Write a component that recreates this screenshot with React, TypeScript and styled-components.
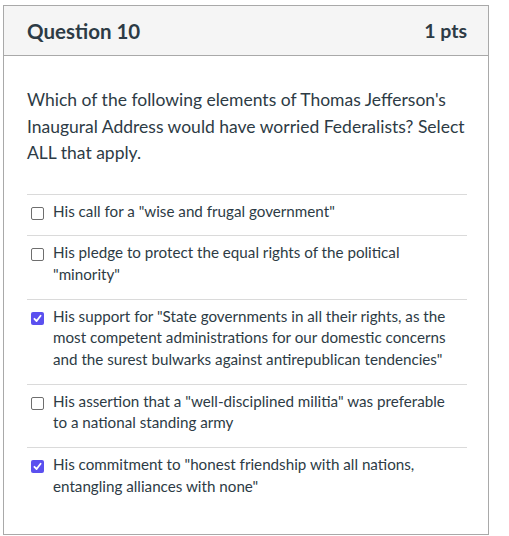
import React from 'react'
import styled, { createGlobalStyle } from 'styled-components'

interface IAnswer {
  text: string
  checked: boolean
}

const answers: IAnswer[] = [
  { text: 'His call for a "wise and frugal government"', checked: false },
  { text: 'His pledge to protect the equal rights of the political "minority"', checked: false },
  {
    text: 'His support for "State governments in all their rights, as the most competent administrations for our domestic concerns and the surest bulwarks against antirepublican tendencies"',
    checked: true,
  },
  { text: 'His assertion that a "well-disciplined militia" was preferable to a national standing army', checked: false },
  { text: 'His commitment to "honest friendship with all nations, entangling alliances with none"', checked: true },
]

const CheckBox: React.FC<{ checked: boolean }> = ({ checked }) => (
  <Box $checked={checked}>
    {checked && (
      <svg width="9" height="9" viewBox="0 0 9 9">
        <path d="M1.4 4.8 L3.6 7 L7.6 1.8" fill="none" stroke="#fff" strokeWidth="1.8" strokeLinecap="round" strokeLinejoin="round" />
      </svg>
    )}
  </Box>
)

const App: React.FC = () => {
  return (
    <>
      <GlobalStyle />
      <Page>
        <Card>
          <Header>
            <Title>Question 10</Title>
            <Points>1 pts</Points>
          </Header>
          <Body>
            <Prompt>
              Which of the following elements of Thomas Jefferson's Inaugural Address would have worried Federalists? Select ALL that apply.
            </Prompt>
            <AnswerList>
              {answers.map((a, i) => (
                <AnswerRow key={i}>
                  <CheckBox checked={a.checked} />
                  <AnswerText>{a.text}</AnswerText>
                </AnswerRow>
              ))}
            </AnswerList>
          </Body>
        </Card>
      </Page>
    </>
  )
}

export default App

const GlobalStyle = createGlobalStyle`
  html, body {
    margin: 0;
    padding: 0;
    background: #ffffff;
  }
  body {
    font-family: Lato, "Open Sans", "Liberation Sans", sans-serif;
    color: #2d3b45;
  }
`

const Page = styled.div`
  padding: 5px 0 0 3px;
  width: 509px;
  height: 536px;
  box-sizing: border-box;
`

const Card = styled.div`
  width: 486px;
  height: 530px;
  box-sizing: border-box;
  border: 1px solid #a9a9a9;
  display: flex;
  flex-direction: column;
`

const Header = styled.div`
  height: 50px;
  box-sizing: border-box;
  background: #f5f5f5;
  border-bottom: 1px solid #a9a9a9;
  display: flex;
  align-items: center;
  justify-content: space-between;
  padding: 0 21px 0 23px;
`

const Title = styled.h2`
  margin: 0;
  font-size: 20.5px;
  font-weight: 700;
  color: #2d3b45;
`

const Points = styled.div`
  font-size: 19.5px;
  font-weight: 700;
  color: #2d3b45;
`

const Body = styled.div`
  padding: 31px 21px 0 23px;
`

const Prompt = styled.p`
  margin: 0 0 27px;
  font-size: 17.5px;
  line-height: 26.5px;
`

const AnswerList = styled.div`
  display: flex;
  flex-direction: column;
`

const AnswerRow = styled.div`
  display: flex;
  align-items: flex-start;
  gap: 9px;
  border-top: 1px solid #dadada;
  padding: 6px 10px 13px 4px;
`

const Box = styled.span<{ $checked: boolean }>`
  flex: none;
  width: 13px;
  height: 13px;
  margin-top: 6px;
  box-sizing: border-box;
  border-radius: 2px;
  border: ${p => (p.$checked ? 'none' : '1px solid #6e6e6e')};
  background: ${p => (p.$checked ? '#5b50ef' : '#fff')};
  display: flex;
  align-items: center;
  justify-content: center;
`

const AnswerText = styled.span`
  font-size: 15.2px;
  line-height: 21.7px;
`
